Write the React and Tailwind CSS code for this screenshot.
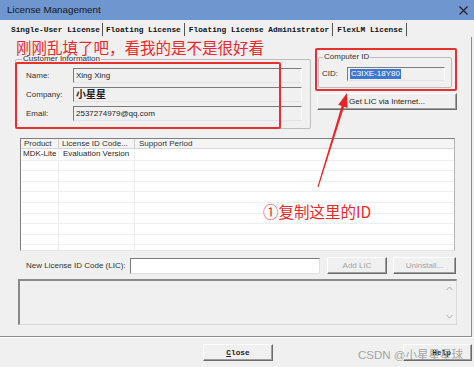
import React from "react";

function Edit({ className = "", children }) {
  return (
    <div
      className={`flex items-center border-t border-l border-t-[#7a7a7a] border-l-[#7a7a7a] border-r border-b border-r-white border-b-[#e3e3e3] bg-[#f0f0f0] pl-[2px] ${className}`}
    >
      {children}
    </div>
  );
}

function Button({ className = "", disabled, children }) {
  return (
    <div
      className={`flex items-center justify-center border-t border-l border-t-white border-l-white border-r border-b border-r-[#6b6b6b] border-b-[#6b6b6b] bg-[#f0f0f0] shadow-[inset_-1px_-1px_0_#a0a0a0] ${
        disabled ? "text-[#a3a3a3]" : "text-[#1e1e1e]"
      } ${className}`}
    >
      {children}
    </div>
  );
}

const rows = Array.from({ length: 10 });

export default function App() {
  return (
    <div className="relative w-[474px] h-[367px] overflow-hidden bg-[#f0f0f0] flex flex-col font-['Liberation_Sans','Noto_Sans_CJK_SC',sans-serif] text-[8px] leading-[10px] text-[#1e1e1e]">
      {/* Title bar */}
      <div className="h-[20px] shrink-0 bg-[#6f96cf] flex items-center justify-between pl-[7px] pr-[5px]">
        <span className="text-[9.8px] text-[#151515]">License Management</span>
        <svg width="9" height="9" viewBox="0 0 9 9" className="mr-[1px]">
          <path d="M0.5 0.5 L8.5 8.5 M8.5 0.5 L0.5 8.5" stroke="#1c1c1c" strokeWidth="1.1" />
        </svg>
      </div>

      {/* Tabs */}
      <div className="h-[17px] shrink-0 flex items-end pl-[11px] pb-[1px] font-['Liberation_Mono',monospace] font-bold text-[7.8px] leading-[12px] text-[#111]">
        <span>Single-User License</span>
        <span className="ml-[2px] mr-[3px] w-px h-[13px] bg-[#555]" />
        <span>Floating License</span>
        <span className="ml-[3px] mr-[4px] w-px h-[13px] bg-[#555]" />
        <span>Floating License Administrator</span>
        <span className="ml-[3px] mr-[4px] w-px h-[13px] bg-[#555]" />
        <span>FlexLM License</span>
        <span className="ml-[3px] w-px h-[13px] bg-[#555]" />
      </div>

      {/* Tab panel */}
      <div className="h-[300px] shrink-0 mr-[2px] border-r border-b border-[#8c8c8c]">
        <div className="flex items-start pt-[14px]">
          <fieldset className="ml-[15px] mt-[2px] w-[296px] h-[76px] border border-[#bdbdbd] rounded-[2px]">
            <legend className="ml-[6px] px-[1px] leading-[12px] text-[#333]">Customer Information</legend>
            <div className="flex flex-col gap-[4px] mt-[3px] pl-[10px]">
              <div className="flex items-center">
                <span className="w-[47px] text-[#333]">Name:</span>
                <Edit className="w-[229px] h-[15px]">Xing Xing</Edit>
              </div>
              <div className="flex items-center">
                <span className="w-[47px] text-[#333]">Company:</span>
                <Edit className="w-[229px] h-[15px] text-[10px] font-bold leading-[12px]">小星星</Edit>
              </div>
              <div className="flex items-center">
                <span className="w-[47px] text-[#333]">Email:</span>
                <Edit className="w-[229px] h-[15px]">2537274979@qq.com</Edit>
              </div>
            </div>
          </fieldset>

          <div className="ml-[6px] w-[140px] flex flex-col">
            <fieldset className="ml-[1px] w-[134px] h-[37px] border border-[#bdbdbd] rounded-[2px]">
              <legend className="ml-[4px] px-[1px] leading-[12px] text-[#333]">Computer ID</legend>
              <div className="flex items-center mt-[4px] pl-[3px]">
                <span className="w-[25px] text-[#333]">CID:</span>
                <Edit className="w-[98px] h-[14px]">
                  <span className="bg-[#3a78d4] text-white px-[1px] leading-[10px]">C3IXE-18Y80</span>
                </Edit>
              </div>
            </fieldset>
            <Button className="mt-[5px] h-[17px] w-[140px]">Get LIC via Internet...</Button>
          </div>
        </div>

        {/* License table */}
        <div className="mt-[9px] ml-[20px] w-[435px] h-[113px] overflow-hidden bg-white border-t border-l border-[#7f7f7f] border-r border-r-[#b5b5b5] border-b border-b-[#e6e6e6]">
          <div className="flex h-[10px] bg-[#f4f4f4] border-b border-[#d8d8d8] text-[#333]">
            <div className="w-[38px] pl-[3px] border-r border-[#d0d0d0]">Product</div>
            <div className="w-[76px] pl-[3px] border-r border-[#d0d0d0]">License ID Code...</div>
            <div className="flex-1 pl-[4px]">Support Period</div>
          </div>
          {rows.map((_, i) => (
            <div key={i} className={`flex border-b border-[#efefef] ${i === 0 ? "h-[11.6px] items-center" : "h-[10.6px]"}`}>
              <div className="w-[38px] pl-[2px] border-r border-[#ececec]">{i === 0 ? "MDK-Lite" : ""}</div>
              <div className="w-[76px] pl-[4px] border-r border-[#ececec]">{i === 0 ? "Evaluation Version" : ""}</div>
              <div className="flex-1" />
            </div>
          ))}
        </div>

        {/* New LIC */}
        <div className="mt-[6px] flex items-center h-[17px] pl-[26px]">
          <span className="w-[104px] text-[#333]">New License ID Code (LIC):</span>
          <div className="w-[190px] h-[16px] bg-white border-t border-l border-[#7a7a7a] border-r border-r-[#e0e0e0] border-b border-b-[#e0e0e0]" />
          <Button disabled className="ml-[7px] w-[60px] h-[17px]">Add LIC</Button>
          <Button disabled className="ml-[6px] w-[63px] h-[17px]">Uninstall...</Button>
        </div>

        {/* Messages */}
        <div className="mt-[5px] ml-[18px] w-[439px] h-[46px] flex justify-end border-t-2 border-l-2 border-[#8a8a8a] border-r border-b border-r-[#d9d9d9] border-b-[#d9d9d9]">
          <div className="w-[14px] flex flex-col items-center justify-between py-[5px]">
            <svg width="7" height="5" viewBox="0 0 7 5">
              <path d="M0.5 4 L3.5 1 L6.5 4" fill="none" stroke="#a8a8a8" />
            </svg>
            <svg width="7" height="5" viewBox="0 0 7 5">
              <path d="M0.5 1 L3.5 4 L6.5 1" fill="none" stroke="#a8a8a8" />
            </svg>
          </div>
        </div>
      </div>

      {/* Footer */}
      <div className="flex-1 border-t border-white pt-[6px] flex items-start font-['Liberation_Mono',monospace] font-bold text-[7.8px]">
        <Button className="ml-[203px] w-[70px] h-[17px]">
          <span><span className="underline">C</span>lose</span>
        </Button>
        <Button className="ml-[130px] w-[69px] h-[17px]">
          <span className="pl-[8px]">Help</span>
        </Button>
      </div>

      {/* Annotations */}
      <div className="absolute left-[16px] top-[38px] whitespace-nowrap text-[15.5px] leading-[18px] text-[#f2262a] font-['Noto_Sans_CJK_SC',sans-serif]">
        刚刚乱填了吧，看我的是不是很好看
      </div>
      <div className="absolute left-[15px] top-[62px] w-[266px] h-[67px] border-2 border-[#e8302e] rounded-[2px]" />
      <div className="absolute left-[315px] top-[48px] w-[142px] h-[43px] border-2 border-[#e8302e] rounded-[2px]" />
      <svg className="absolute left-0 top-0" width="474" height="367">
        <polygon
          points="347,93 347.6,108 344.1,106.8 318.5,187.2 317.5,186.8 341.6,106 338.2,104.8"
          fill="#ee2222"
        />
      </svg>
      <div className="absolute left-[263px] top-[202px] whitespace-nowrap text-[15.5px] leading-[18px] text-[#f2262a] font-['Noto_Sans_CJK_SC',sans-serif]">
        ①复制这里的ID
      </div>
      <div className="absolute left-[358px] top-[347px] whitespace-nowrap text-[11.5px] leading-[16px] text-[#8e8e8e]/80 font-['Liberation_Sans','Noto_Sans_CJK_SC',sans-serif]">
        CSDN @小星星星球
      </div>
    </div>
  );
}
